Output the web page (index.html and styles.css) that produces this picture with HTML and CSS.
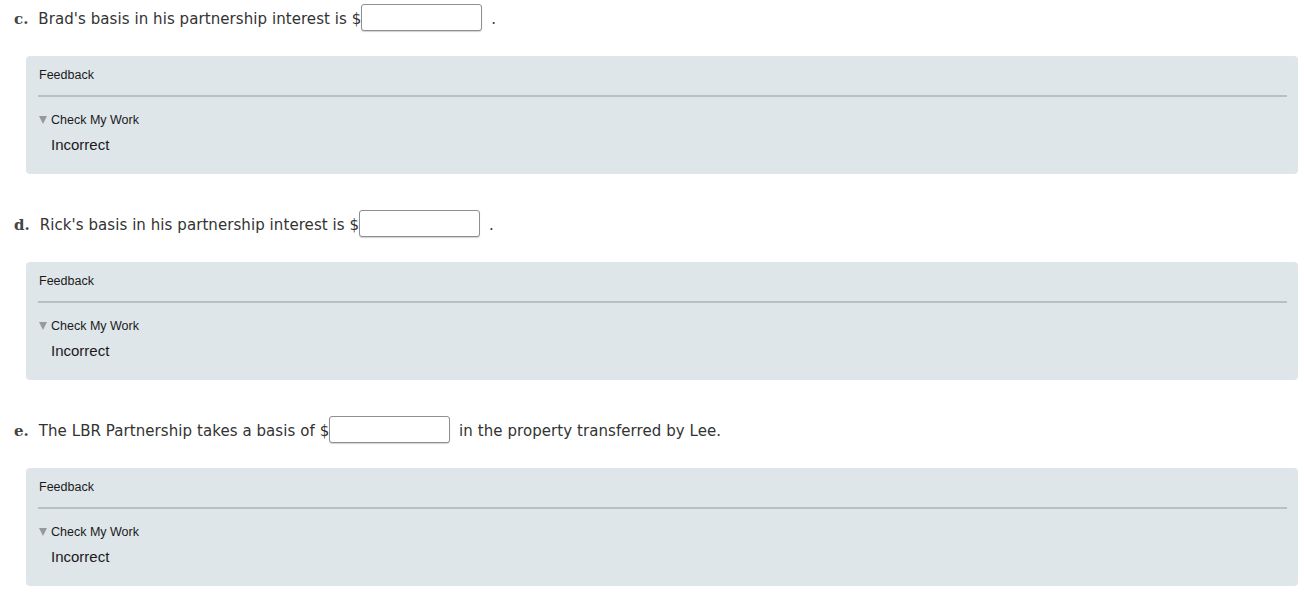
FILE: index.html
```html
<!DOCTYPE html>
<html>
<head>
<meta charset="utf-8">
<link rel="stylesheet" href="styles.css">
</head>
<body>
<div class="part">
  <div class="question"><span class="label">c.</span><span class="qtext">Brad's basis in his partnership interest is $</span><input class="answer" type="text"><span class="qtext"> .</span></div>
  <div class="feedback">
    <div class="fb-head">Feedback</div>
    <div class="fb-body">
      <div class="check"><svg class="tri" width="8" height="8" viewBox="0 0 8 8"><polygon points="0,0 8,0 4,8" fill="#949a9d"/></svg>Check My Work</div>
      <div class="result">Incorrect</div>
    </div>
  </div>
</div>
<div class="part">
  <div class="question"><span class="label">d.</span><span class="qtext">Rick's basis in his partnership interest is $</span><input class="answer" type="text"><span class="qtext"> .</span></div>
  <div class="feedback">
    <div class="fb-head">Feedback</div>
    <div class="fb-body">
      <div class="check"><svg class="tri" width="8" height="8" viewBox="0 0 8 8"><polygon points="0,0 8,0 4,8" fill="#949a9d"/></svg>Check My Work</div>
      <div class="result">Incorrect</div>
    </div>
  </div>
</div>
<div class="part">
  <div class="question"><span class="label">e.</span><span class="qtext">The LBR Partnership takes a basis of $</span><input class="answer" type="text"><span class="qtext"> in the property transferred by Lee.</span></div>
  <div class="feedback">
    <div class="fb-head">Feedback</div>
    <div class="fb-body">
      <div class="check"><svg class="tri" width="8" height="8" viewBox="0 0 8 8"><polygon points="0,0 8,0 4,8" fill="#949a9d"/></svg>Check My Work</div>
      <div class="result">Incorrect</div>
    </div>
  </div>
</div>
</body>
</html>
```
FILE: styles.css
```css
html, body {
  margin: 0;
  padding: 0;
  background: #ffffff;
}
body {
  padding: 4px 6px 0 14px;
  font-family: "DejaVu Sans", Verdana, sans-serif;
  color: #333333;
}
.part {
  margin-bottom: 36px;
}
.question {
  display: flex;
  align-items: center;
  height: 27px;
  font-size: 15px;
  white-space: pre;
}
.qtext {
  letter-spacing: 0.07px;
  padding-top: 2px;
}
.label {
  font-family: "DejaVu Serif", Georgia, serif;
  font-weight: bold;
  font-size: 15px;
  color: #444444;
  margin-right: 10px;
  padding-top: 2px;
}
.answer {
  box-sizing: border-box;
  width: 121px;
  height: 27px;
  margin: 0 4px 0 0;
  padding: 0 4px;
  border: 1px solid #8f8f8f;
  border-radius: 3px;
  box-shadow: 0 1px 1px rgba(0,0,0,0.18);
  background: #ffffff;
  font-size: 15px;
}
.feedback {
  margin: 25px 0 0 12px;
  background: #dfe6ea;
  border-radius: 4px;
  padding: 0 11px 0 12px;
  height: 118px;
  box-sizing: border-box;
  font-family: "Liberation Sans", Arial, sans-serif;
  color: #1a1a1a;
}
.fb-head {
  font-size: 12.5px;
  line-height: 15px;
  padding: 12px 0 12px 1px;
  border-bottom: 2px solid #b9c0c4;
}
.fb-body {
  padding: 16px 0 0 1px;
}
.check {
  font-size: 12.5px;
  line-height: 15px;
  display: flex;
  align-items: center;
}
.tri {
  margin: 0 4px 2px 0;
  flex: none;
}
.result {
  font-size: 15px;
  line-height: 18px;
  margin: 8px 0 0 12px;
}
```
